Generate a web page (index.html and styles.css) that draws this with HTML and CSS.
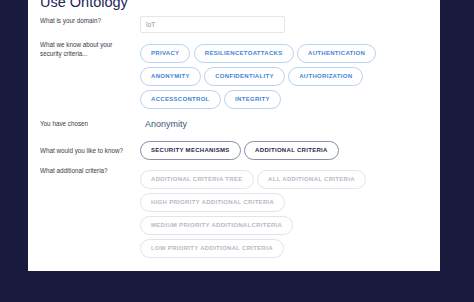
FILE: index.html
```html
<!DOCTYPE html>
<html lang="en">
<head>
    <meta charset="UTF-8">
    <meta name="viewport" content="width=device-width, initial-scale=1.0">
    <title>Use Ontology</title>
    <link rel="stylesheet" href="styles.css">
</head>
<body>
    <div class="card">
        <h2 class="title">Use Ontology</h2>

        <div class="row domain-row">
            <div class="label">What is your domain?</div>
            <div class="field">
                <div class="input">IoT</div>
            </div>
        </div>

        <div class="row criteria-row">
            <div class="label lifted">What we know about your security criteria...</div>
            <div class="chips">
                <span class="chip blue">Privacy</span>
                <span class="chip blue">ResilienceToAttacks</span>
                <span class="chip blue">Authentication</span>
                <span class="chip blue">Anonymity</span>
                <span class="chip blue">Confidentiality</span>
                <span class="chip blue">Authorization</span>
                <span class="chip blue">AccessControl</span>
                <span class="chip blue">Integrity</span>
            </div>
        </div>

        <div class="row chosen-row">
            <div class="label">You have chosen</div>
            <div class="chosen">Anonymity</div>
        </div>

        <div class="row know-row">
            <div class="label">What would you like to know?</div>
            <div class="chips">
                <span class="chip dark">Security mechanisms</span>
                <span class="chip dark">Additional criteria</span>
            </div>
        </div>

        <div class="row extra-row">
            <div class="label lifted">What additional criteria?</div>
            <div class="chips">
                <span class="chip off">Additional criteria tree</span>
                <span class="chip off">All additional criteria</span>
                <span class="chip off">High priority additional criteria</span>
                <span class="chip off">Medium priority additionalcriteria</span>
                <span class="chip off">Low priority additional criteria</span>
            </div>
        </div>
    </div>
</body>
</html>
```

FILE: styles.css
```css
body {
    margin: 0;
    padding: 0;
    background: #1a1a3f;
    font-family: "Liberation Sans", Arial, sans-serif;
    height: 302px;
    overflow: hidden;
}
.card {
    margin: -5px 0 0 28px;
    width: 412px;
    box-sizing: border-box;
    padding: 0 12px 13px;
    background: #ffffff;
}
.title {
    margin: 0;
    font-size: 14.5px;
    line-height: 14px;
    font-weight: normal;
    color: #22255a;
}
.row {
    display: grid;
    grid-template-columns: 100px 1fr;
    align-items: start;
}
.label {
    font-size: 6.3px;
    line-height: 9.5px;
    color: #3a3a48;
    padding-right: 8px;
}
.lifted {
    margin-top: -4.5px;
}
.domain-row {
    margin-top: 7px;
}
.input {
    width: 145px;
    height: 17px;
    box-sizing: border-box;
    border: 1px solid #e4e6eb;
    border-radius: 2px;
    padding-left: 5px;
    font-size: 6.3px;
    line-height: 15px;
    color: #8c8d99;
}
.criteria-row {
    margin-top: 11px;
}
.chips {
    display: flex;
    flex-wrap: wrap;
    gap: 4px 3.5px;
    max-width: 260px;
}
.chip {
    display: inline-block;
    height: 19px;
    box-sizing: border-box;
    padding: 0 10px;
    border: 1px solid;
    border-radius: 10px;
    font-size: 6px;
    line-height: 17px;
    font-weight: bold;
    letter-spacing: 0.3px;
    text-transform: uppercase;
    white-space: nowrap;
}
.blue {
    color: #3f86d6;
    border-color: #b8d3f0;
}
.dark {
    color: #1f2748;
    border-color: #8a8fa6;
}
.off {
    color: #b6bac6;
    border-color: #e2e4ea;
}
.chosen-row {
    margin-top: 9px;
    align-items: center;
}
.chosen {
    padding-left: 5px;
    font-size: 9px;
    line-height: 12px;
    color: #44527e;
}
.know-row {
    margin-top: 11px;
    align-items: center;
}
.extra-row {
    margin-top: 10px;
}
```
